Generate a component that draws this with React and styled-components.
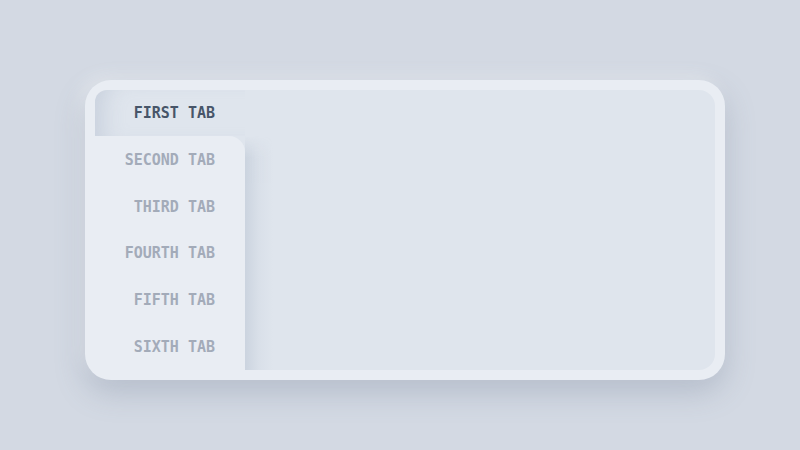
import React, { useState } from 'react'
import styled, { createGlobalStyle } from 'styled-components'

const GlobalStyle = createGlobalStyle`
  html, body {
    margin: 0;
    padding: 0;
    background: #d3d9e3;
  }
`;

const Page = styled.div`
  width: 800px;
  height: 450px;
  box-sizing: border-box;
  padding: 80px 0 0 85px;
`;

const Card = styled.div`
  width: 640px;
  height: 300px;
  box-sizing: border-box;
  padding: 10px;
  display: flex;
  border-radius: 26px;
  background: #e9edf3;
  box-shadow: 0 12px 30px rgba(100, 116, 139, 0.28), -6px -6px 16px rgba(255, 255, 255, 0.35);
`;

const TabList = styled.div`
  width: 150px;
  display: flex;
  flex-direction: column;
  background: #dfe5ed;
  border-top-left-radius: 12px;
  position: relative;
  z-index: 1;
`;

const Tab = styled.div`
  position: relative;
  height: ${p => p.$h}px;
  flex: none;
  display: flex;
  align-items: center;
  justify-content: flex-end;
  padding-right: 30px;
  font-family: "DejaVu Sans Mono", "Liberation Mono", monospace;
  font-weight: bold;
  font-size: 15px;
  cursor: pointer;
  color: ${p => (p.$active ? '#475569' : '#a3abb9')};
  background: ${p => (p.$active ? 'transparent' : '#e9edf3')};
  border-top-right-radius: ${p => (p.$afterActive ? '16px' : '0')};
  border-top-left-radius: ${p => (p.$active ? '12px' : '0')};
  box-shadow: ${p => (p.$active ? 'inset 22px 0 22px -14px rgba(148, 163, 184, 0.3)' : 'none')};

  &::after {
    content: '';
    display: ${p => (p.$active ? 'none' : 'block')};
    position: absolute;
    left: 100%;
    top: 0;
    bottom: 0;
    width: 28px;
    background: linear-gradient(to right, rgba(148, 163, 184, 0.26), rgba(148, 163, 184, 0.08) 50%, rgba(148, 163, 184, 0));
    ${p => p.$afterActive && '-webkit-mask-image: linear-gradient(to bottom, transparent, #000 22px); mask-image: linear-gradient(to bottom, transparent, #000 22px);'}
  }
`;

const Panel = styled.div`
  flex: 1;
  background: #dfe5ed;
  border-top-right-radius: 16px;
  border-bottom-right-radius: 16px;
`;

const tabs = ['FIRST TAB', 'SECOND TAB', 'THIRD TAB', 'FOURTH TAB', 'FIFTH TAB', 'SIXTH TAB'];
const heights = [46, 47, 47, 46, 47, 47];

const App = () => {
  const [active, setActive] = useState(0);
  return (
    <Page>
      <GlobalStyle />
      <Card>
        <TabList>
          {tabs.map((t, i) => (
            <Tab
              key={t}
              $h={heights[i]}
              $active={i === active}
              $afterActive={i === active + 1}
              onClick={() => setActive(i)}
            >
              {t}
            </Tab>
          ))}
        </TabList>
        <Panel />
      </Card>
    </Page>
  )
}

export default App
